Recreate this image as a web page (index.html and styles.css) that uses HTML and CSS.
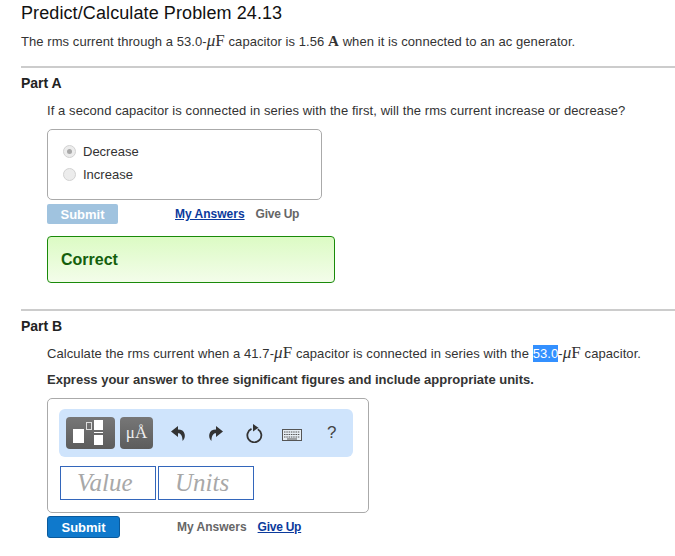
FILE: index.html
```html
<!DOCTYPE html>
<html lang="en">
<head>
<meta charset="utf-8">
<title>Predict/Calculate Problem 24.13</title>
<link rel="stylesheet" href="styles.css">
</head>
<body>
<main class="page">
  <h1 class="title">Predict/Calculate Problem 24.13</h1>
  <p class="intro">The rms current through a 53.0-<span class="math"><i class="mu">μ</i>F</span> capacitor is 1.56 <span class="math bold">A</span> when it is connected to an ac generator.</p>

  <section class="part part-a">
    <h2 class="part-title">Part A</h2>
    <div class="part-body">
      <p class="question">If a second capacitor is connected in series with the first, will the rms current increase or decrease?</p>
      <div class="box choices">
        <label class="choice"><span class="radio checked"></span>Decrease</label>
        <label class="choice"><span class="radio"></span>Increase</label>
      </div>
      <div class="actions actions-a">
        <span class="btn btn-off">Submit</span>
        <a class="link" href="#">My Answers</a>
        <span class="muted">Give Up</span>
      </div>
      <div class="correct">Correct</div>
    </div>
  </section>

  <section class="part part-b">
    <h2 class="part-title">Part B</h2>
    <div class="part-body">
      <p class="question">Calculate the rms current when a 41.7-<span class="math"><i class="mu">μ</i>F</span> capacitor is connected in series with the <mark class="sel">53.0</mark>-<span class="math"><i class="mu">μ</i>F</span> capacitor.</p>
      <p class="express">Express your answer to three significant figures and include appropriate units.</p>
      <div class="box answer">
        <div class="toolbar">
          <span class="tool tool-frac">
            <svg width="49" height="32" viewBox="0 0 49 32"><rect x="7" y="12" width="11" height="14" fill="#fff"/><rect x="20.5" y="5.5" width="5" height="7" fill="none" stroke="#ddd"/><rect x="28" y="3" width="9" height="10" fill="#fff"/><rect x="28" y="15" width="9" height="1" fill="#fff"/><rect x="28" y="18" width="9" height="10" fill="#fff"/></svg>
          </span>
          <span class="tool tool-unit">μÅ</span>
          <svg class="icon icon-undo" width="14" height="15" viewBox="0 0 14 15"><path d="M7 0 0 5.5 7 11V7.300c2.600 0 4.400 1.800 4.600 7.700 2-2 2.600-4.600 2-7C13 5 10.500 3.600 7 3.600z" fill="#333"/></svg>
          <svg class="icon icon-redo" width="14" height="15" viewBox="0 0 14 15"><path d="M7 0l7 5.500L7 11V7.300c-2.600 0-4.400 1.800-4.600 7.700-2-2-2.600-4.600-2-7C1 5 3.500 3.600 7 3.600z" fill="#333"/></svg>
          <svg class="icon icon-reset" width="17" height="19" viewBox="0 0 17 19"><path d="M11.800 5.200A7 7 0 1 1 5.500 4.900" fill="none" stroke="#333" stroke-width="1.800"/><path d="M7 0l5.500 3.700L7 7.500z" fill="#333"/></svg>
          <svg class="icon icon-keys" width="20" height="12" viewBox="0 0 20 12"><rect x=".5" y=".5" width="19" height="11" fill="#e6edf3" stroke="#555"/><path d="M2 3h16M2 5.500h16M2 8h16" stroke="#555" stroke-dasharray="1.500 .8"/><path d="M5 10h10" stroke="#555"/></svg>
          <span class="help">?</span>
        </div>
        <div class="fields">
          <span class="field">Value</span>
          <span class="field">Units</span>
        </div>
      </div>
      <div class="actions actions-b">
        <span class="btn btn-on">Submit</span>
        <span class="muted">My Answers</span>
        <a class="link" href="#">Give Up</a>
      </div>
    </div>
  </section>
</main>
</body>
</html>
```
FILE: styles.css
```css
* { box-sizing: border-box; }
html, body { margin: 0; background: #fff; }
body { font-family: "Liberation Sans", Arial, sans-serif; color: #333; font-size: 13px; overflow: hidden; }
.page { padding: 3px 0 0 21px; }
.title { margin: 0; font-size: 18px; line-height: 21px; font-weight: 400; color: #111; letter-spacing: 0.1px; }
.intro { margin: 8px 0 0; line-height: 20px; height: 20px; letter-spacing: 0.07px; }
.math { font-family: "Liberation Serif", serif; font-size: 17px; line-height: 1; color: #333; }
.mu { font-style: italic; }
.bold { font-weight: 700; font-size: 15px; }
.part { border-top: 2px solid #ccc; }
.part-a { margin-top: 14px; padding-top: 8px; }
.part-b { margin-top: 26px; padding-top: 8px; }
.part-title { margin: 0; font-size: 14px; line-height: 15px; font-weight: 700; color: #222; }
.part-body { padding-left: 26px; }
.question { margin: 10px 0 0; line-height: 18px; letter-spacing: 0.08px; }
.part-a .question { margin-top: 11px; }
.box { border: 1px solid #aaa; border-radius: 5px; background: #fff; }
.choices { margin-top: 9px; width: 275px; height: 71px; padding: 10px 15px; }
.choice { display: flex; align-items: center; height: 23px; gap: 7px; }
.radio { width: 13px; height: 13px; border-radius: 50%; border: 1px solid #d2d2d2; background: #ececec; position: relative; }
.radio.checked::after { content: ""; position: absolute; inset: 3px; border-radius: 50%; background: #a8a8a8; }
.actions { display: flex; align-items: center; font-size: 12px; font-weight: 700; }
.actions-a { margin-top: 4px; height: 20px; }
.actions-b { margin-top: 3px; height: 22px; }
.btn { display: flex; align-items: center; justify-content: center; width: 71px; color: #fff; font-size: 13px; font-weight: 700; border-radius: 2px; }
.btn-off { height: 20px; background: #a0c3df; }
.btn-on { width: 73px; height: 22px; background: #0f79cc; border: 1px solid #0a5a9c; border-radius: 3px; }
.link { color: #0b3a9c; text-decoration: underline; }
.muted { color: #666; }
.actions-a .link { margin-left: 57px; }
.actions-a .muted { margin-left: 11px; letter-spacing: -0.25px; }
.actions-b .muted { margin-left: 57px; }
.actions-b .link { margin-left: 11px; letter-spacing: -0.25px; }
.correct { margin-top: 12px; width: 288px; height: 47px; border: 1px solid #1a8a0a; border-radius: 4px; background: linear-gradient(#dcfbc4, #f3fdea); color: #145f0c; font-size: 16px; font-weight: 700; line-height: 45px; padding-left: 13px; }
.sel { background: #3390ff; color: #fff; padding-block: 1px; }
.express { margin: 8px 0 0; font-weight: 700; line-height: 18px; }
.answer { margin-top: 9px; width: 322px; height: 115px; padding: 10px 11px; }
.toolbar { display: flex; align-items: center; height: 48px; width: 294px; padding-left: 7px; background: #cfe4fc; border-radius: 6px; }
.tool { display: flex; align-items: center; justify-content: center; height: 32px; background: linear-gradient(#777, #5c5c5c); border-radius: 4px; color: #eee; }
.tool-frac { width: 49px; }
.tool-unit { width: 33px; margin-left: 5px; font-family: "Liberation Serif", serif; font-size: 17px; }
.icon-undo { margin-left: 18px; }
.icon-redo { margin-left: 24px; }
.icon-reset { margin-left: 23px; }
.icon-keys { margin-left: 19px; margin-top: 3px; }
.help { margin-left: 25px; font-size: 17px; color: #444; }
.fields { display: flex; gap: 2px; margin: 9px 0 0 1px; }
.field { width: 96px; height: 34px; border: 1px solid #3366bb; font-family: "Liberation Serif", serif; font-style: italic; font-size: 25px; line-height: 32px; color: #a8a8a8; padding-left: 16px; }
```
